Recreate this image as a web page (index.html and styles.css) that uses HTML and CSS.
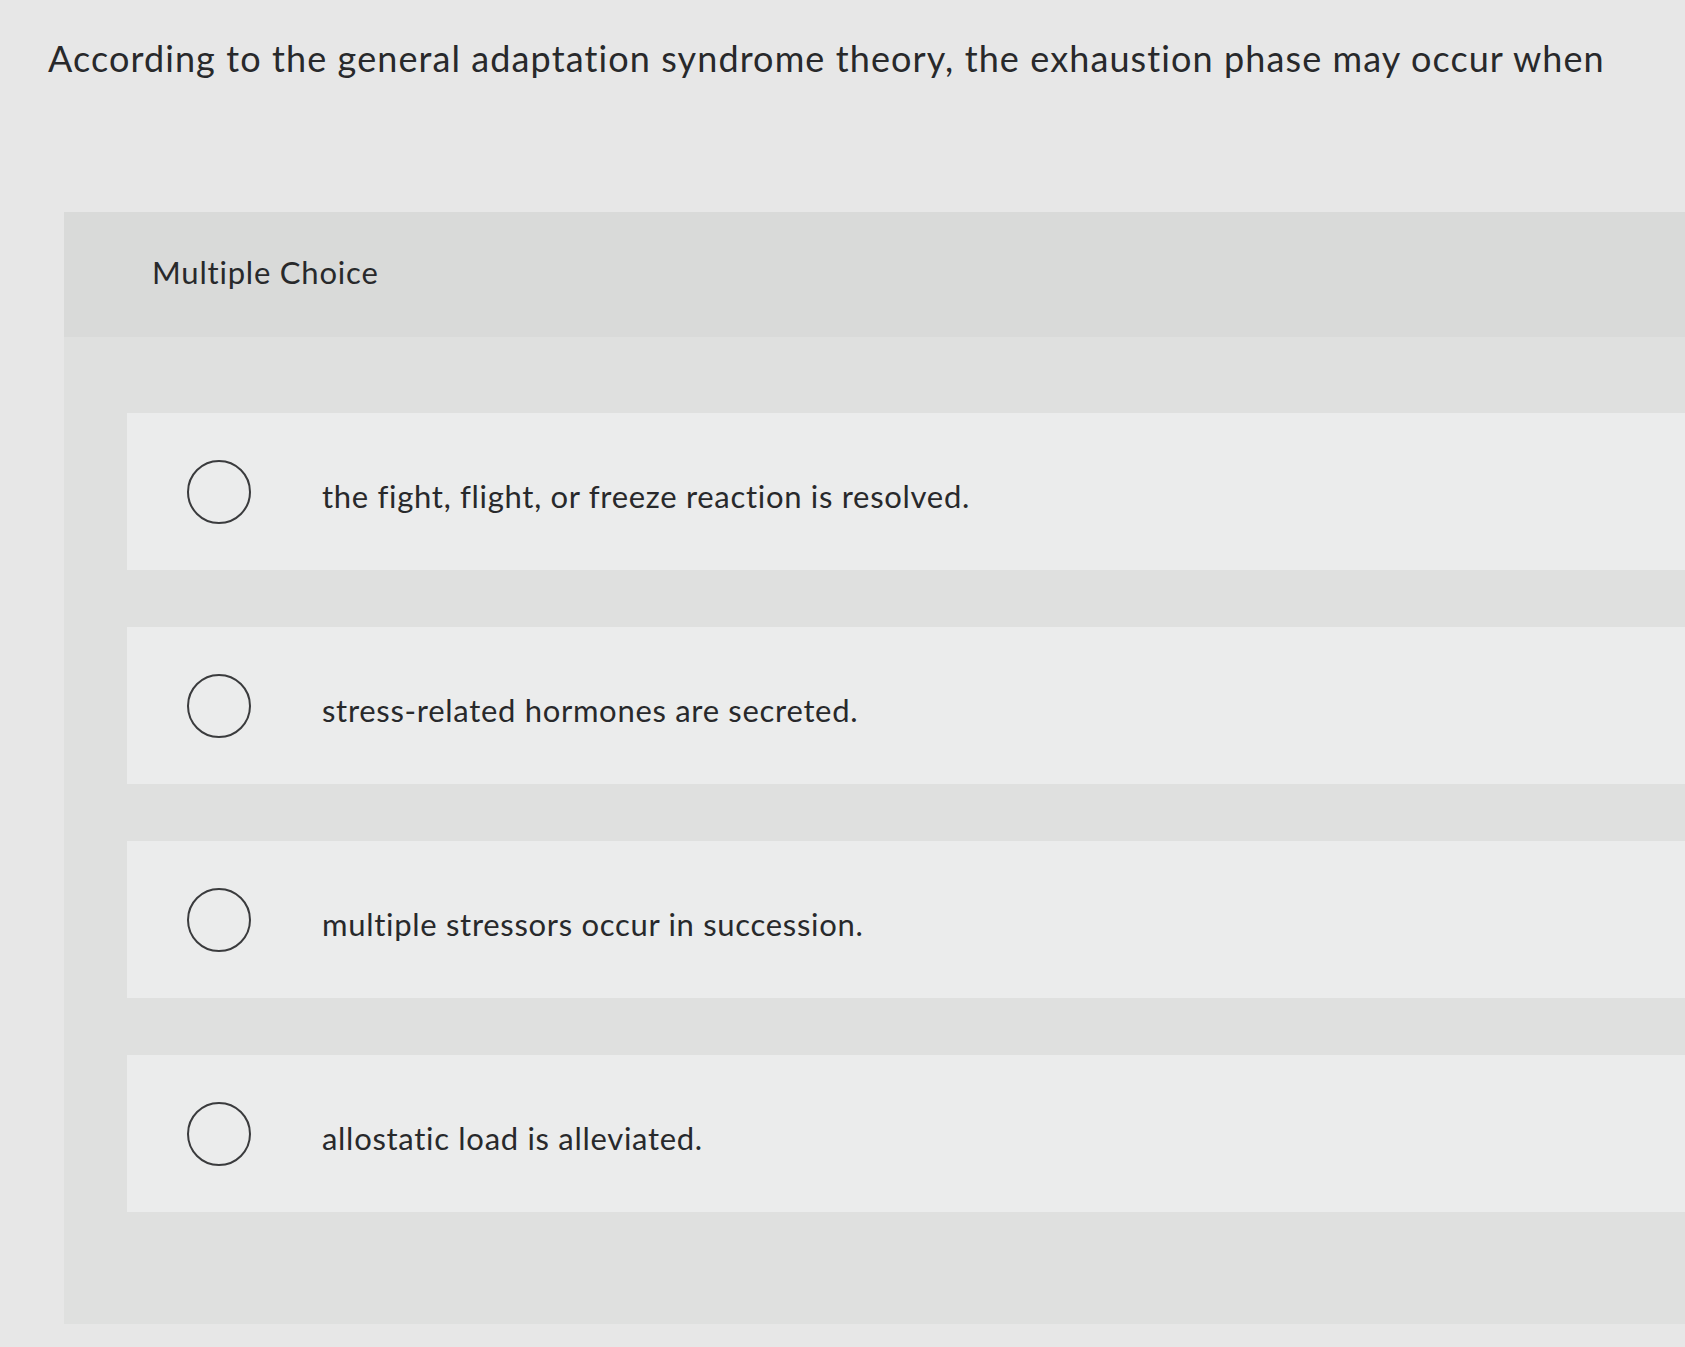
FILE: index.html
```html
<!DOCTYPE html>
<html lang="en">
<head>
<meta charset="utf-8">
<title>Multiple Choice</title>
<link rel="stylesheet" href="styles.css">
</head>
<body>
<main class="page">
  <h1 class="prompt">According to the general adaptation syndrome theory, the exhaustion phase may occur when</h1>
  <section class="panel">
    <div class="panel-head">Multiple Choice</div>
    <div class="choices">
      <label class="choice">
        <span class="radio"></span>
        <span class="choice-text">the fight, flight, or freeze reaction is resolved.</span>
      </label>
      <label class="choice">
        <span class="radio"></span>
        <span class="choice-text">stress-related hormones are secreted.</span>
      </label>
      <label class="choice">
        <span class="radio"></span>
        <span class="choice-text">multiple stressors occur in succession.</span>
      </label>
      <label class="choice">
        <span class="radio"></span>
        <span class="choice-text">allostatic load is alleviated.</span>
      </label>
    </div>
  </section>
</main>
</body>
</html>
```

FILE: styles.css
```css
html, body {
  margin: 0;
  padding: 0;
  background: #e7e7e7;
}
body {
  font-family: Lato, "Open Sans", "Liberation Sans", sans-serif;
  color: #28292b;
  overflow: hidden;
}
.page {
  display: flex;
  flex-direction: column;
}
.prompt {
  margin: 0 0 132px 48px;
  padding-top: 37px;
  font-size: 36px;
  line-height: 43px;
  font-weight: 400;
  letter-spacing: 1.1px;
  white-space: nowrap;
}
.panel {
  margin-left: 64px;
  background: #dfe0df;
  padding-bottom: 112px;
}
.panel-head {
  background: #d9dad9;
  padding: 42px 0 46px 88px;
  font-size: 31px;
  line-height: 37px;
  letter-spacing: 0.8px;
}
.choices {
  display: flex;
  flex-direction: column;
  gap: 57px;
  padding-top: 76px;
}
.choice {
  margin-left: 63px;
  height: 157px;
  background: #ebecec;
  display: flex;
  align-items: center;
  gap: 71px;
  padding-left: 60px;
}
.radio {
  flex: none;
  width: 64px;
  height: 64px;
  box-sizing: border-box;
  border: 2.5px solid #3a3b3d;
  border-radius: 50%;
}
.choice-text {
  margin-top: 10px;
  font-size: 31px;
  line-height: 37px;
  letter-spacing: 0.7px;
}
```
